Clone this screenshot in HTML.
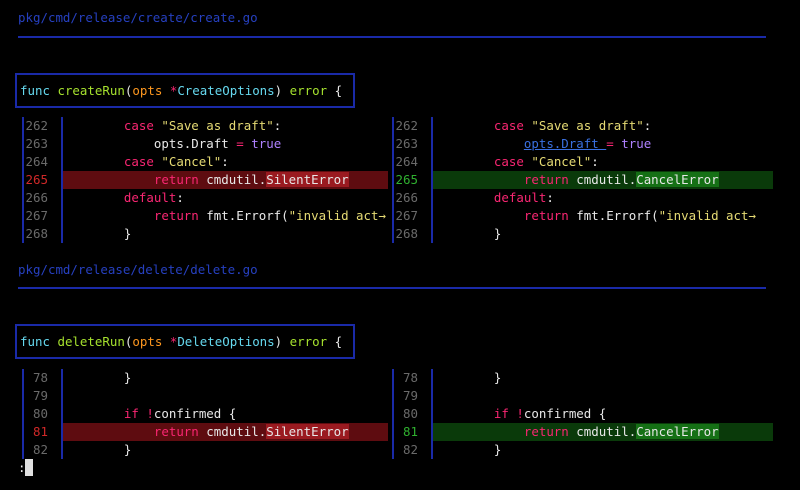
<!DOCTYPE html>
<html><head><meta charset="utf-8"><style>
body{margin:0;background:#000;width:800px;height:490px;overflow:hidden;position:relative;font-family:"DejaVu Sans Mono","Liberation Mono",monospace;font-size:12.45px;color:#e8e8e8}
div{position:absolute;white-space:pre;line-height:18px}
.path{color:#2640c0;left:18px}
.hr{height:2px;background:#1a2aa8;left:18px;width:748px}
.box{border:2px solid #1a2aa8;left:15px;width:333px;height:31px;line-height:31px;padding-left:3px;box-sizing:content-box}
.vl{width:2px;background:#1a2aa8}
.n{color:#6a6a6a;width:30px;text-align:right}
.k{color:#f92672}.s{color:#e6db74}.f{color:#a6e22e}.o{color:#fd971f}.t{color:#66d9ef}.p{color:#ae81ff}
.rb{background:#5e0c10}.gb{background:#0a3a0a}
.rw{background:#9a1a20}.gw{background:#157015}
.rn{color:#d02828}.gn{color:#2fb02f}
.u{color:#3a70e0;text-decoration:underline}
</style></head><body>
<div class="path" style="top:9px">pkg/cmd/release/create/create.go</div>
<div class="hr" style="top:36px"></div>
<div class="box" style="top:73px"><span class="t">func</span> <span class="f">createRun</span>(<span class="o">opts</span> <span class="k">*</span><span class="t">CreateOptions</span>) <span class="f">error</span> {</div>

<div class="vl" style="left:22px;top:117px;height:126px"></div>
<div class="vl" style="left:61px;top:117px;height:126px"></div>
<div class="vl" style="left:392px;top:117px;height:126px"></div>
<div class="vl" style="left:431px;top:117px;height:126px"></div>
<div class="rb" style="left:63px;top:171px;width:325px;height:18px"></div>
<div class="gb" style="left:433px;top:171px;width:340px;height:18px"></div>

<div class="n" style="left:18px;top:117px">262</div><div style="left:64px;top:117px">        <span class="k">case</span> <span class="s">"Save as draft"</span>:</div>
<div class="n" style="left:18px;top:135px">263</div><div style="left:64px;top:135px">            opts.Draft <span class="k">=</span> <span class="p">true</span></div>
<div class="n" style="left:18px;top:153px">264</div><div style="left:64px;top:153px">        <span class="k">case</span> <span class="s">"Cancel"</span>:</div>
<div class="n rn" style="left:18px;top:171px">265</div><div style="left:64px;top:171px">            <span class="k">return</span> cmdutil.<span class="rw">SilentError</span></div>
<div class="n" style="left:18px;top:189px">266</div><div style="left:64px;top:189px">        <span class="k">default</span>:</div>
<div class="n" style="left:18px;top:207px">267</div><div style="left:64px;top:207px">            <span class="k">return</span> fmt.Errorf(<span class="s">"invalid act→</span></div>
<div class="n" style="left:18px;top:225px">268</div><div style="left:64px;top:225px">        }</div>

<div class="n" style="left:388px;top:117px">262</div><div style="left:434px;top:117px">        <span class="k">case</span> <span class="s">"Save as draft"</span>:</div>
<div class="n" style="left:388px;top:135px">263</div><div style="left:434px;top:135px">            <span class="u">opts.Draft </span><span class="k">=</span> <span class="p">true</span></div>
<div class="n" style="left:388px;top:153px">264</div><div style="left:434px;top:153px">        <span class="k">case</span> <span class="s">"Cancel"</span>:</div>
<div class="n gn" style="left:388px;top:171px">265</div><div style="left:434px;top:171px">            <span class="k">return</span> cmdutil.<span class="gw">CancelError</span></div>
<div class="n" style="left:388px;top:189px">266</div><div style="left:434px;top:189px">        <span class="k">default</span>:</div>
<div class="n" style="left:388px;top:207px">267</div><div style="left:434px;top:207px">            <span class="k">return</span> fmt.Errorf(<span class="s">"invalid act→</span></div>
<div class="n" style="left:388px;top:225px">268</div><div style="left:434px;top:225px">        }</div>

<div class="path" style="top:261px">pkg/cmd/release/delete/delete.go</div>
<div class="hr" style="top:287px"></div>
<div class="box" style="top:324px"><span class="t">func</span> <span class="f">deleteRun</span>(<span class="o">opts</span> <span class="k">*</span><span class="t">DeleteOptions</span>) <span class="f">error</span> {</div>

<div class="vl" style="left:22px;top:369px;height:90px"></div>
<div class="vl" style="left:61px;top:369px;height:90px"></div>
<div class="vl" style="left:392px;top:369px;height:90px"></div>
<div class="vl" style="left:431px;top:369px;height:90px"></div>
<div class="rb" style="left:63px;top:423px;width:325px;height:18px"></div>
<div class="gb" style="left:433px;top:423px;width:340px;height:18px"></div>

<div class="n" style="left:18px;top:369px">78</div><div style="left:64px;top:369px">        }</div>
<div class="n" style="left:18px;top:387px">79</div>
<div class="n" style="left:18px;top:405px">80</div><div style="left:64px;top:405px">        <span class="k">if</span> <span class="k">!</span>confirmed {</div>
<div class="n rn" style="left:18px;top:423px">81</div><div style="left:64px;top:423px">            <span class="k">return</span> cmdutil.<span class="rw">SilentError</span></div>
<div class="n" style="left:18px;top:441px">82</div><div style="left:64px;top:441px">        }</div>

<div class="n" style="left:388px;top:369px">78</div><div style="left:434px;top:369px">        }</div>
<div class="n" style="left:388px;top:387px">79</div>
<div class="n" style="left:388px;top:405px">80</div><div style="left:434px;top:405px">        <span class="k">if</span> <span class="k">!</span>confirmed {</div>
<div class="n gn" style="left:388px;top:423px">81</div><div style="left:434px;top:423px">            <span class="k">return</span> cmdutil.<span class="gw">CancelError</span></div>
<div class="n" style="left:388px;top:441px">82</div><div style="left:434px;top:441px">        }</div>

<div style="left:18px;top:459px">:</div>
<div style="left:25px;top:459px;width:8px;height:17px;background:#e0e0e0"></div>
</body></html>
